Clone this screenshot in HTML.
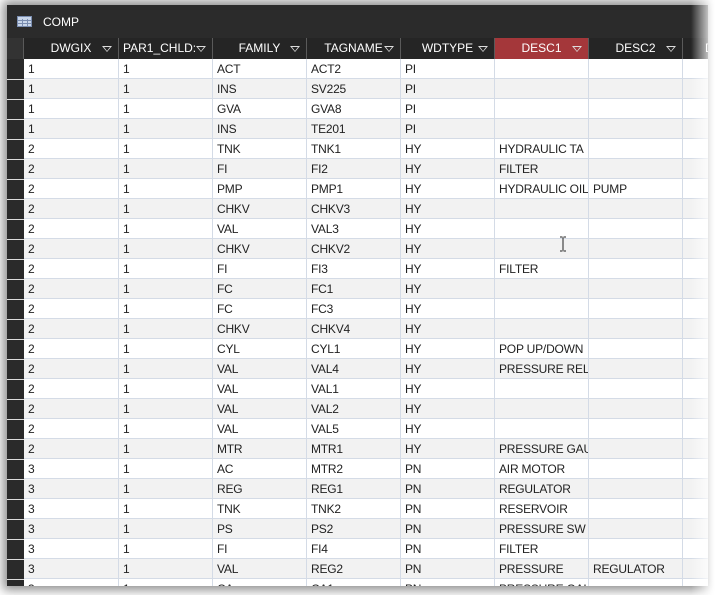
<!DOCTYPE html>
<html><head><meta charset="utf-8"><style>
*{margin:0;padding:0;box-sizing:border-box}
body{width:721px;height:595px;background:#fff;overflow:hidden;position:relative;font-family:"Liberation Sans",sans-serif}
#win{position:absolute;left:7px;top:5px;width:701px;height:581px;background:#fff;overflow:hidden;box-shadow:0 0 10px 4px rgba(0,0,0,.45)}
#title{position:absolute;left:0;top:0;width:100%;height:33px;background:#2b2b2b;color:#fff;font-size:12px}
#title span{position:absolute;left:36px;top:10px}
#icon{position:absolute;left:10px;top:11px;width:15px;height:11px;background:#c9d6ea;border:1px solid #7a8db0}
#icon:before{content:"";position:absolute;left:0;right:0;top:2px;bottom:0;background:repeating-linear-gradient(90deg,transparent 0 4px,#7a8db0 4px 5px),repeating-linear-gradient(0deg,transparent 0 2px,#7a8db0 2px 3px)}
#hdr{position:absolute;left:0;top:33px;height:21px;width:100%;background:#252525}
.h{position:absolute;top:0;height:21px;color:#fff;font-size:12px;line-height:21px;text-align:center;border-right:1px solid #5a5a5a}
.h i{position:absolute;right:6px;top:8px;width:0;height:0;border-left:5px solid transparent;border-right:5px solid transparent;border-top:6px solid #ddd}
.h i:after{content:"";position:absolute;left:-3px;top:-5px;border-left:3px solid transparent;border-right:3px solid transparent;border-top:4px solid #252525}
.h.red{background:#a4373a}.h.red i:after{border-top-color:#a4373a}
#sel{position:absolute;left:0;top:33px;width:17px;height:560px;background:#2a2a2a}
.row{position:absolute;left:17px;height:20px;width:700px;border-bottom:1px solid #d4dbe6;font-size:12px;color:#222;line-height:21px}
.row.a{background:#f2f2f2}
.row span{position:absolute;top:0;height:20px;padding-left:4px;border-right:1px solid #d4dbe6;white-space:nowrap;overflow:hidden;letter-spacing:-0.2px}
.sl{position:absolute;left:0;width:17px;height:1px;background:#dcdcdc}
#fade{position:absolute;right:0;top:0;width:30px;height:595px;background:linear-gradient(90deg,rgba(255,255,255,0),#fff 80%)}
</style></head><body>
<div id="win">
<div id="title"><div id="icon"></div><span>COMP</span></div>
<div id="sel"></div>
<div id="hdr">
<div class="h" style="left:0;width:17px;background:#333"></div>
<div class="h" style="left:17px;width:95px">DWGIX<i></i></div>
<div class="h" style="left:112px;width:94px;text-align:left;padding-left:4px">PAR1_CHLD:<i></i></div>
<div class="h" style="left:206px;width:94px">FAMILY<i></i></div>
<div class="h" style="left:300px;width:94px">TAGNAME<i></i></div>
<div class="h" style="left:394px;width:94px">WDTYPE<i></i></div>
<div class="h red" style="left:488px;width:94px">DESC1<i></i></div>
<div class="h" style="left:582px;width:94px">DESC2<i></i></div>
<div class="h" style="left:676px;width:94px;text-align:left;padding-left:22px">DE</div>
</div>
<div id="rows"></div>
</div>
<div id="fade"></div>
<svg style="position:absolute;left:558px;top:236px" width="10" height="16"><path d="M2 1h2.5M5.5 1H8M5 1.5v13M2 15h2.5M5.5 15H8" stroke="#222" stroke-width="1" fill="none"/></svg>
<script>
var d=[["1","1","ACT","ACT2","PI","",""],["1","1","INS","SV225","PI","",""],["1","1","GVA","GVA8","PI","",""],["1","1","INS","TE201","PI","",""],
["2","1","TNK","TNK1","HY","HYDRAULIC TA",""],["2","1","FI","FI2","HY","FILTER",""],["2","1","PMP","PMP1","HY","HYDRAULIC OIL","PUMP"],
["2","1","CHKV","CHKV3","HY","",""],["2","1","VAL","VAL3","HY","",""],["2","1","CHKV","CHKV2","HY","",""],["2","1","FI","FI3","HY","FILTER",""],
["2","1","FC","FC1","HY","",""],["2","1","FC","FC3","HY","",""],["2","1","CHKV","CHKV4","HY","",""],["2","1","CYL","CYL1","HY","POP UP/DOWN",""],
["2","1","VAL","VAL4","HY","PRESSURE RELI",""],["2","1","VAL","VAL1","HY","",""],["2","1","VAL","VAL2","HY","",""],["2","1","VAL","VAL5","HY","",""],
["2","1","MTR","MTR1","HY","PRESSURE GAU",""],["3","1","AC","MTR2","PN","AIR MOTOR",""],["3","1","REG","REG1","PN","REGULATOR",""],
["3","1","TNK","TNK2","PN","RESERVOIR",""],["3","1","PS","PS2","PN","PRESSURE SW",""],["3","1","FI","FI4","PN","FILTER",""],
["3","1","VAL","REG2","PN","PRESSURE","REGULATOR"],["3","1","CA","CA1","PN","PRESSURE GAU",""]];
var L=[0,95,189,283,377,471,565,659],W=[95,94,94,94,94,94,94,94],h="";
d.forEach(function(r,i){var y=54+i*20;h+='<div class="row'+(i%2?' a':'')+'" style="top:'+y+'px">';
for(var c=0;c<8;c++)h+='<span style="left:'+L[c]+'px;width:'+W[c]+'px">'+(r[c]||'')+'</span>';
h+='</div><div class="sl" style="top:'+(y+20)+'px"></div>';});
document.getElementById('rows').innerHTML=h;
</script>
</body></html>
